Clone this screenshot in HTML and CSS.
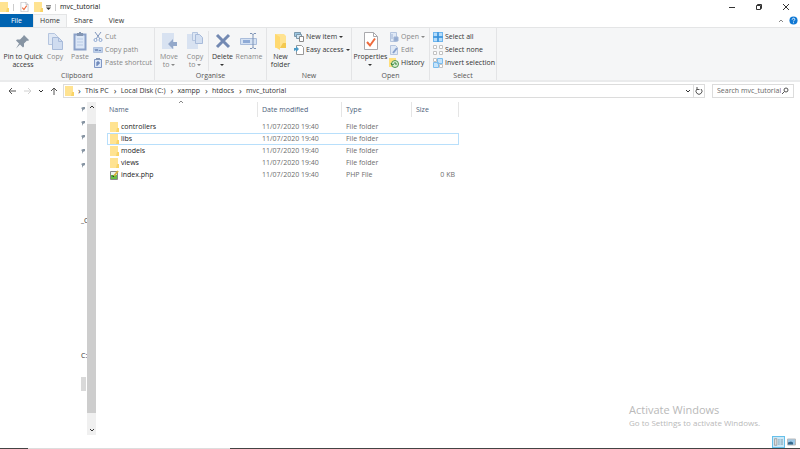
FILE: index.html
```html
<!DOCTYPE html>
<html lang="en-GB">
<head>
    <meta charset="UTF-8">
    <meta name="viewport" content="width=device-width, initial-scale=1.0">
    <title>mvc_tutorial</title>
    <link rel="stylesheet" href="styles.css">
</head>
<body>
    <svg class="sprite" aria-hidden="true">
        <symbol id="folder" viewBox="0 0 9 10">
            <path d="M0 0h8v6h1v4H0z" fill="#ffe391"/>
            <path d="M7 6h2v4H6z" fill="#f9d467"/>
        </symbol>
        <symbol id="chevron" viewBox="0 0 6 6">
            <path d="M1 2l2 2 2-2" fill="none" stroke="currentColor"/>
        </symbol>
        <symbol id="chevron-up" viewBox="0 0 6 6">
            <path d="M1 4l2-2 2 2" fill="none" stroke="currentColor"/>
        </symbol>
        <symbol id="check" viewBox="0 0 14 18">
            <path d="M.5.5h9l4 4v13H.5z" fill="#fff" stroke="#a9a9ad"/>
            <path d="M9.500 .5v4h4" fill="none" stroke="#a9a9ad"/>
            <path d="M3 10l3 3.500 5-7" fill="none" stroke="#ee6a3c" stroke-width="2"/>
        </symbol>
    </svg>

    <header class="title-bar">
        <svg class="folder"><use href="#folder"/></svg>
        <span class="divider"></span>
        <svg class="small-check"><use href="#check"/></svg>
        <svg class="folder"><use href="#folder"/></svg>
        <svg class="customise" viewBox="0 0 6 6"><path d="M0 1h6" stroke="#333"/><path d="M0 3h6L3 6z" fill="#333"/></svg>
        <span class="divider"></span>
        <h1>mvc_tutorial</h1>
        <div class="window-buttons">
            <button aria-label="Minimise"><svg viewBox="0 0 8 8"><path d="M1 4.500h6" stroke="#333"/></svg></button>
            <button aria-label="Restore"><svg viewBox="0 0 8 8"><path d="M1.500 2.500h4v4h-4zM2.500 2.500v-1h4v4h-1" fill="none" stroke="#333"/></svg></button>
            <button aria-label="Close"><svg viewBox="0 0 8 8"><path d="M1 1l6 6M7 1L1 7" stroke="#333"/></svg></button>
        </div>
    </header>

    <nav class="tabs">
        <button class="tab file">File</button>
        <button class="tab active">Home</button>
        <button class="tab">Share</button>
        <button class="tab">View</button>
        <button class="collapse" aria-label="Collapse ribbon"><svg class="arrow"><use href="#chevron-up"/></svg></button>
        <button class="help" aria-label="Help"><svg viewBox="0 0 10 10"><circle cx="5" cy="5" r="4.500" fill="#0f78d4"/><path d="M3.500 4c0-2 3-2 3-.3C6.500 4.700 5 4.700 5 6M5 7v1" fill="none" stroke="#fff"/></svg></button>
    </nav>

    <div class="ribbon">
        <section class="group clipboard">
            <div class="commands">
                <button class="big pin">
                    <svg viewBox="0 0 18 20"><path d="M10 4l5 5-1 1-1-.5-3 3v3l-1 1-3-3-4 4 3-5-3-3 1-1h3l3-3z" fill="#8794a3"/></svg>
                    <span>Pin to Quick<br>access</span>
                </button>
                <button class="big copy" disabled>
                    <svg viewBox="0 0 18 20"><path d="M2.500 2.500h6l3 3v8h-9z" fill="#dfe8f5" stroke="#b5c5df"/><path d="M6.500 6.500h6l4 4v8h-10z" fill="#cfdcf0" stroke="#a8bbda"/><path d="M12.500 6.500v4h4" fill="none" stroke="#a8bbda"/></svg>
                    <span>Copy</span>
                </button>
                <button class="big paste" disabled>
                    <svg viewBox="0 0 18 20"><path d="M3.500 3.500h11v15h-11z" fill="#dce7f7" stroke="#8ba1c9" stroke-width="2"/><path d="M6 2h2V1h2v1h2v3H6z" fill="#8496b3"/><path d="M6 8h6M6 11h6M6 14h6" stroke="#b9cae5"/></svg>
                    <span>Paste</span>
                </button>
                <div class="stack">
                    <button disabled><svg viewBox="0 0 10 10"><path d="M2 0l5 7M8 0L3 7" stroke="#8197bd"/><circle cx="2.500" cy="8" r="1.500" fill="none" stroke="#8da7d2"/><circle cx="7.500" cy="8" r="1.500" fill="none" stroke="#8da7d2"/></svg>Cut</button>
                    <button disabled><svg viewBox="0 0 10 10"><path d="M.5 2.500h9v5h-9z" fill="#bdd0ea" stroke="#b2c3df"/><path d="M2 4l1 2 1-2 1 2M6 5.500h2" fill="none" stroke="#7289b5"/></svg>Copy path</button>
                    <button disabled><svg viewBox="0 0 10 10"><path d="M1.500 1.500h7v8h-7z" fill="#dce7f7" stroke="#8197c5"/><path d="M3 0h4v2H3z" fill="#8496b3"/><path d="M4 8V4h2v2H4" fill="none" stroke="#4f6ca8"/></svg>Paste shortcut</button>
                </div>
            </div>
            <h2>Clipboard</h2>
        </section>

        <section class="group organise">
            <div class="commands">
                <button class="big move" disabled>
                    <svg viewBox="0 0 18 20"><path d="M2 2h12v16H2z" fill="#d8e2f1"/><path d="M8 13l5-5v3h4v4h-4v3z" fill="#93a8ca"/></svg>
                    <span>Move<br>to <i class="caret"></i></span>
                </button>
                <button class="big copy-to" disabled>
                    <svg viewBox="0 0 18 20"><path d="M1 3h11v15H1z" fill="#d8e2f1"/><path d="M6.500 1.500h5v8h-5z" fill="#dce6f4" stroke="#b4c5df"/><path d="M9.500 3.500h4l3 3v6h-7z" fill="#d3dff1" stroke="#a8bbda"/></svg>
                    <span>Copy<br>to <i class="caret"></i></span>
                </button>
                <button class="big delete">
                    <svg viewBox="0 0 18 20"><path d="M3 4l12 12M15 4L3 16" stroke="#7389b2" stroke-width="3"/></svg>
                    <span>Delete<br><i class="caret"></i></span>
                </button>
                <button class="big rename" disabled>
                    <svg viewBox="0 0 18 20"><path d="M.5 7.500h16v6H.5z" fill="#d4e1f3" stroke="#aabddb"/><path d="M3 9h7v3H3z" fill="#8eaad6"/><path d="M10 2.500h2l1 1 1-1h2M13 3v14M10 17.500h2l1-1 1 1h2" fill="none" stroke="#7d93b6"/></svg>
                    <span>Rename</span>
                </button>
            </div>
            <h2>Organise</h2>
        </section>

        <section class="group new">
            <div class="commands">
                <button class="big new-folder">
                    <svg viewBox="0 0 18 20"><path d="M3 3h9l2 2v12H3z" fill="#ffe391"/><path d="M3 3l5 3v13l-5-3z" fill="#ffd970"/><path d="M11 12h3v5h-6z" fill="#f4c951"/></svg>
                    <span>New<br>folder</span>
                </button>
                <div class="stack">
                    <button><svg viewBox="0 0 10 10"><path d="M.5.5h6v4h-6z" fill="#9cc7e2" stroke="#7b98ac"/><path d="M2.500 2.500h5v4h-5z" fill="#d3e7f4" stroke="#7b98ac"/><path d="M5.500 4.500h4v5h-4z" fill="#fff" stroke="#888"/></svg>New item <i class="caret"></i></button>
                    <button><svg viewBox="0 0 10 10"><path d="M2.500.5h5l2 2v7h-7z" fill="#fff" stroke="#999"/><path d="M0 6V3h2V1l3 3-3 3V5z" fill="#4d9ac6"/></svg>Easy access <i class="caret"></i></button>
                </div>
            </div>
            <h2>New</h2>
        </section>

        <section class="group open">
            <div class="commands">
                <button class="big properties">
                    <svg><use href="#check"/></svg>
                    <span>Properties<br><i class="caret"></i></span>
                </button>
                <div class="stack">
                    <button disabled><svg viewBox="0 0 10 10"><path d="M1.500.5h6v9h-6z" fill="#e0e9f6" stroke="#b5c5df"/><path d="M3 2v5M5 5h4v4H5z" fill="#94abd1" stroke="#a0b4d5"/></svg>Open <i class="caret"></i></button>
                    <button disabled><svg viewBox="0 0 10 10"><path d="M1.500.5h5l2 2v7h-7z" fill="#e0e9f6" stroke="#b5c5df"/><path d="M4 8l4-5" stroke="#86a0cc" stroke-width="2"/></svg>Edit</button>
                    <button><svg viewBox="0 0 10 10"><path d="M0 0h7v9H0z" fill="#ffdf7c"/><circle cx="6" cy="6" r="3.500" fill="#d9edd5" stroke="#50964e"/><path d="M6 4v2h2M2 5l1 2 2-1" fill="none" stroke="#34853a"/></svg>History</button>
                </div>
            </div>
            <h2>Open</h2>
        </section>

        <section class="group select">
            <div class="commands">
                <div class="stack">
                    <button><svg viewBox="0 0 10 10"><path d="M0 0h10v10H0z" fill="#6db5ee"/><path d="M1 1h3v3H1zM6 1h3v3H6zM1 6h3v3H1zM6 6h3v3H6z" fill="#b4dcfb"/><path d="M5 0v10M0 5h10" stroke="#2d87d3"/></svg>Select all</button>
                    <button><svg viewBox="0 0 10 10"><path d="M.5.5h3v3h-3zM6.500.5h3v3h-3zM.5 6.500h3v3h-3zM6.500 6.500h3v3h-3z" fill="#fff" stroke="#c2c2c2"/></svg>Select none</button>
                    <button><svg viewBox="0 0 10 10"><path d="M4.500.5h5v5h-5zM.5 4.500h5v5h-5z" fill="#c4e4fc" stroke="#7dbcec"/><path d="M.5.5h3v3h-3zM6.500 6.500h3v3h-3z" fill="#fff" stroke="#c2c2c2"/></svg>Invert selection</button>
                </div>
            </div>
            <h2>Select</h2>
        </section>
    </div>

    <div class="address-bar">
        <div class="history-buttons">
            <button aria-label="Back"><svg viewBox="0 0 8 8"><path d="M8 4H1M4 1L1 4l3 3" fill="none" stroke="#555"/></svg></button>
            <button aria-label="Forward" disabled><svg viewBox="0 0 8 8"><path d="M0 4h7M4 1l3 3-3 3" fill="none" stroke="#d0d0d0"/></svg></button>
            <button aria-label="Recent locations"><svg class="arrow"><use href="#chevron"/></svg></button>
            <button aria-label="Up"><svg viewBox="0 0 8 8"><path d="M4 8V1M1 4l3-3 3 3" fill="none" stroke="#555"/></svg></button>
        </div>
        <div class="path">
            <svg class="folder"><use href="#folder"/></svg>
            <ol>
                <li><a href="#">This PC</a></li>
                <li><a href="#">Local Disk (C:)</a></li>
                <li><a href="#">xampp</a></li>
                <li><a href="#">htdocs</a></li>
                <li><a href="#">mvc_tutorial</a></li>
            </ol>
            <button aria-label="Previous locations"><svg class="arrow"><use href="#chevron"/></svg></button>
            <button class="refresh" aria-label="Refresh"><svg viewBox="0 0 8 8"><path d="M6 2a3 3 0 1 1-4 0M2 0v2.500h2.500" fill="none" stroke="#555"/></svg></button>
        </div>
        <label class="search">
            <input type="text" placeholder="Search mvc_tutorial" aria-label="Search mvc_tutorial">
            <svg viewBox="0 0 8 8"><circle cx="5" cy="3" r="2" fill="none" stroke="#555"/><path d="M3.500 4.500L1 7" stroke="#555"/></svg>
        </label>
    </div>

    <main>
        <aside class="nav-pane">
            <ul>
                <li class="pinned"><svg viewBox="0 0 4 6"><path d="M0 2l2-1h2v2L2 4 1 6V3z" fill="#8795a3"/></svg></li>
                <li class="pinned"><svg viewBox="0 0 4 6"><path d="M0 2l2-1h2v2L2 4 1 6V3z" fill="#8795a3"/></svg></li>
                <li class="pinned"><svg viewBox="0 0 4 6"><path d="M0 2l2-1h2v2L2 4 1 6V3z" fill="#8795a3"/></svg></li>
                <li class="pinned"><svg viewBox="0 0 4 6"><path d="M0 2l2-1h2v2L2 4 1 6V3z" fill="#8795a3"/></svg></li>
                <li class="pinned"><svg viewBox="0 0 4 6"><path d="M0 2l2-1h2v2L2 4 1 6V3z" fill="#8795a3"/></svg></li>
                <li class="item">_C</li>
                <li class="item drive">C:</li>
                <li class="selected"></li>
            </ul>
        </aside>
        <div class="scrollbar">
            <svg class="arrow"><use href="#chevron-up"/></svg>
            <div class="thumb"></div>
            <svg class="arrow"><use href="#chevron"/></svg>
        </div>
        <div class="files">
            <table>
                <thead>
                    <tr>
                        <th class="name">Name<svg class="arrow sort"><use href="#chevron-up"/></svg></th>
                        <th class="date">Date modified</th>
                        <th class="type">Type</th>
                        <th class="size">Size</th>
                    </tr>
                </thead>
                <tbody>
                    <tr><td><svg class="folder"><use href="#folder"/></svg>controllers</td><td>11/07/2020 19:40</td><td>File folder</td><td></td></tr>
                    <tr class="focused"><td><svg class="folder"><use href="#folder"/></svg>libs</td><td>11/07/2020 19:40</td><td>File folder</td><td></td></tr>
                    <tr><td><svg class="folder"><use href="#folder"/></svg>models</td><td>11/07/2020 19:40</td><td>File folder</td><td></td></tr>
                    <tr><td><svg class="folder"><use href="#folder"/></svg>views</td><td>11/07/2020 19:40</td><td>File folder</td><td></td></tr>
                    <tr><td><svg class="folder" viewBox="0 0 9 10"><path d="M.5 1.500h7v8h-7z" fill="#eef2ee" stroke="#888"/><path d="M1 5h6v4H1z" fill="#67bd45"/><path d="M1 6l2-1 2 1-2 1z" fill="#3d8f3b"/><path d="M4 6l4-5" stroke="#d8b23c" stroke-width="2"/><path d="M3 7l1-1" stroke="#333"/></svg>index.php</td><td>11/07/2020 19:40</td><td>PHP File</td><td>0 KB</td></tr>
                </tbody>
            </table>
            <div class="activation">
                <strong>Activate Windows</strong>
                <p>Go to Settings to activate Windows.</p>
            </div>
        </div>
    </main>

    <footer>
        <button class="active" aria-label="Details view"><svg viewBox="0 0 11 9"><path d="M.5.5h3v8h-3z" fill="#ddd" stroke="#999"/><path d="M5 2h2M8 2h3M5 4.500h2M8 4.500h3M5 7h2M8 7h3" stroke="#658b9e"/></svg></button>
        <button aria-label="Large icons view"><svg viewBox="0 0 9 7"><path d="M.5.5h8v6h-8z" fill="#9cc8e8" stroke="#bbb"/><path d="M1 6V4l3-1 2 1v2z" fill="#34688c"/></svg></button>
    </footer>
    <div class="taskbar"><span></span></div>
</body>
</html>
```

FILE: styles.css
```css
* {
    box-sizing: border-box;
}
body {
    display: flex;
    flex-direction: column;
    height: 100vh;
    margin: 0;
    overflow: hidden;
    background-color: #fff;
    color: #333;
    font-family: "Open Sans", "Noto Sans", sans-serif;
    font-size: 7px;
    line-height: 8px;
}
button {
    display: flex;
    align-items: center;
    margin: 0;
    padding: 0;
    border: none;
    background: none;
    color: inherit;
    font: inherit;
    white-space: nowrap;
}
svg {
    flex: none;
    display: block;
    width: 8px;
    height: 8px;
}
h1, h2, p, ol, ul {
    margin: 0;
    padding: 0;
    font-size: 7px;
    font-weight: 400;
    list-style: none;
}
a {
    color: inherit;
    text-decoration: none;
}
.sprite {
    display: none;
}
.folder {
    width: 9px;
    height: 10px;
}
.arrow {
    width: 6px;
    height: 6px;
}
.caret {
    display: inline-block;
    border: 2px solid transparent;
    border-top-color: currentColor;
    border-bottom: none;
    vertical-align: middle;
}

/* title bar */
.title-bar {
    display: flex;
    align-items: center;
    height: 14px;
    color: #111;
}
.title-bar .divider {
    width: 1px;
    height: 7px;
    margin: 0 5px 0 4px;
    background-color: #ccc;
}
.small-check {
    width: 9px;
    height: 10px;
    margin: 0 5px 0 1px;
}
.customise {
    width: 5px;
    height: 5px;
    margin-left: 3px;
}
.title-bar .customise + .divider {
    margin: 0 4px;
}
.window-buttons {
    display: flex;
    gap: 19px;
    margin-left: auto;
    padding-right: 10px;
}

/* tabs */
.tabs {
    display: flex;
    height: 13px;
}
.tab {
    justify-content: center;
    width: 33px;
}
.tab.file {
    background-color: #0063b1;
    color: #fff;
}
.tab.active {
    width: 34px;
    border: 1px solid #e4e5e6;
    border-bottom: none;
    background-color: #f5f6f7;
}
.collapse {
    margin-left: auto;
    color: #888;
}
.help {
    margin: 0 2px 0 5px;
}
.help svg {
    width: 9px;
    height: 9px;
}

/* ribbon */
.ribbon {
    display: flex;
    height: 55px;
    border-top: 1px solid #e4e5e6;
    border-bottom: 2px solid #eaebec;
    background-color: #f5f6f7;
}
.group {
    display: flex;
    flex-direction: column;
    justify-content: space-between;
    border-right: 1px solid #e3e4e6;
}
.group h2 {
    color: #555;
    text-align: center;
}
.clipboard {
    width: 155px;
}
.organise {
    width: 112px;
}
.new {
    width: 85px;
}
.open {
    width: 78px;
}
.select {
    width: 67px;
}
.commands {
    display: flex;
    padding-top: 3px;
}
.big {
    flex-direction: column;
    width: 26px;
    height: 40px;
    text-align: center;
}
.big svg {
    width: 18px;
    height: 20px;
    margin-bottom: 2px;
}
.big.pin {
    width: 40px;
    margin-left: 3px;
}
.big.copy {
    width: 24px;
}
.big.move {
    margin-left: 1px;
}
.big.delete {
    width: 28px;
    border-left: 1px solid #e3e4e6;
}
.big.new-folder {
    width: 27px;
}
.big.properties {
    width: 37px;
}
.big.properties svg {
    width: 14px;
    height: 18px;
    margin: 1px 0 3px;
}
button:disabled {
    color: #888;
}
.stack {
    display: flex;
    flex-direction: column;
    gap: 1px;
}
.stack button {
    gap: 2px;
    height: 12px;
}
.stack svg {
    width: 10px;
    height: 10px;
}
.select .stack {
    padding-left: 3px;
}

/* address bar */
.address-bar {
    display: flex;
    gap: 6px;
    padding: 2px 6px 3px;
}
.history-buttons {
    display: flex;
    align-items: center;
    gap: 8px;
    width: 51px;
    padding-left: 2px;
}
.history-buttons .arrow {
    margin: 0 -2px;
}
.path {
    flex: 1;
    display: flex;
    align-items: center;
    height: 14px;
    margin-right: 1px;
    border: 1px solid #dcdcdc;
}
.path .folder {
    margin: 0 4px 0 1px;
}
.path ol {
    display: flex;
    flex: 1;
}
.path li {
    display: flex;
    margin-right: 5px;
}
.path li::before {
    content: "›";
    width: 7px;
    font-size: 9px;
    line-height: 7px;
}
.refresh {
    height: 12px;
    margin-left: 2px;
    padding: 0 1px;
    border-left: 1px solid #dcdcdc;
}
.search {
    display: flex;
    align-items: center;
    width: 82px;
    height: 14px;
    padding: 0 4px;
    border: 1px solid #dcdcdc;
}
.search input {
    flex: 1;
    min-width: 0;
    padding: 0;
    border: none;
    outline: none;
    font: inherit;
}
.search input::placeholder {
    color: #666;
}

/* panes */
main {
    flex: 1;
    display: flex;
    min-height: 0;
    padding-top: 1px;
}
.nav-pane {
    width: 87px;
    padding-left: 81px;
    overflow: hidden;
}
.nav-pane li {
    height: 14px;
    line-height: 14px;
}
.pinned {
    display: flex;
    align-items: center;
}
.pinned svg {
    width: 4px;
    height: 6px;
}
.nav-pane .item {
    margin-top: 42px;
}
.nav-pane .drive {
    margin-top: 121px;
}
.nav-pane .selected {
    width: 5px;
    margin-top: 14px;
    background-color: #d9d9d9;
}
.scrollbar {
    display: flex;
    flex-direction: column;
    align-items: center;
    width: 9px;
    margin-bottom: 1px;
    background-color: #f0f0f0;
}
.scrollbar .arrow {
    margin: 2px 0;
}
.thumb {
    align-self: stretch;
    flex: 1;
    margin: 12px 0;
    background-color: #cdcdcd;
}
.files {
    flex: 1;
    display: flex;
    flex-direction: column;
    justify-content: space-between;
    padding-left: 11px;
}
table {
    width: 352px;
    border-collapse: separate;
    border-spacing: 0;
    table-layout: fixed;
}
th {
    position: relative;
    height: 15px;
    padding: 0 4px;
    border-right: 1px solid #e5e5e5;
    color: #4c607a;
    font-weight: 400;
    text-align: left;
}
th.name {
    width: 151px;
    padding-left: 2px;
}
th.date {
    width: 84px;
}
th.type {
    width: 70px;
}
.sort {
    position: absolute;
    top: -3px;
    left: 71px;
    color: #888;
}
tbody::before {
    content: "";
    display: block;
    height: 4px;
}
td {
    height: 12px;
    padding: 0 4px;
    color: #6d6d6d;
    border: 0 solid #b8dffb;
}
td:first-child {
    padding-left: 3px;
    color: #222;
}
td .folder {
    display: inline-block;
    margin-right: 2px;
    vertical-align: middle;
}
td:last-child {
    text-align: right;
}
.focused td {
    border-width: 1px 0;
}
.focused td:first-child {
    border-left-width: 1px;
    padding-left: 2px;
}
.focused td:last-child {
    border-right-width: 1px;
}
.activation {
    align-self: flex-end;
    width: 171px;
    padding-bottom: 7px;
    color: #b9b9b9;
}
.activation strong {
    font-size: 11px;
    font-weight: 400;
    line-height: 14px;
}
.activation p {
    font-size: 8px;
    line-height: 12px;
}

/* status bar */
footer {
    display: flex;
    justify-content: flex-end;
    gap: 2px;
    height: 12px;
    padding-right: 4px;
}
footer button {
    justify-content: center;
}
footer svg {
    width: 9px;
    height: 8px;
}
footer .active {
    width: 13px;
    border: 1px solid #66c0ea;
    background-color: #cce8f7;
}
.taskbar {
    height: 1px;
    background-color: #444;
}
.taskbar span {
    display: block;
    width: 202px;
    height: 1px;
    margin-left: 28px;
    background-color: #ddd;
}
```
